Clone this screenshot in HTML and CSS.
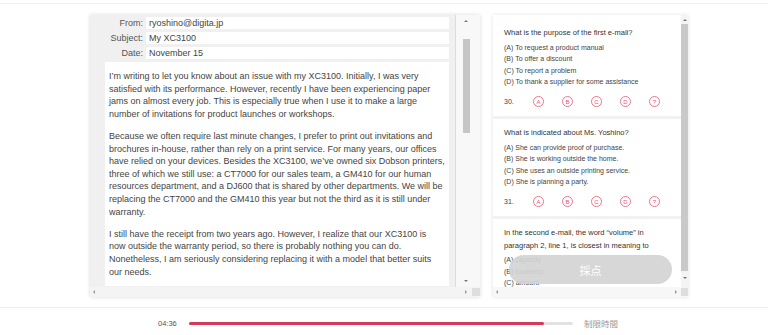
FILE: index.html
```html
<!DOCTYPE html>
<html lang="en">
<head>
    <meta charset="UTF-8">
    <meta name="viewport" content="width=device-width, initial-scale=1.0">
    <title>Reading Test</title>
    <link rel="stylesheet" href="styles.css">
</head>
<body>
    <div class="topbar"></div>
    <div class="main">
        <div class="passage">
            <div class="passage-view">
                <div class="passage-inner">
                    <div class="mail-head">
                        <div class="head-row"><span class="head-label">From:</span><span class="head-value">ryoshino@digita.jp</span></div>
                        <div class="head-row"><span class="head-label">Subject:</span><span class="head-value">My XC3100</span></div>
                        <div class="head-row"><span class="head-label">Date:</span><span class="head-value">November 15</span></div>
                    </div>
                    <div class="mail-body">
                        <p>I’m writing to let you know about an issue with my XC3100. Initially, I was very<br>satisfied with its performance. However, recently I have been experiencing paper<br>jams on almost every job. This is especially true when I use it to make a large<br>number of invitations for product launches or workshops.</p>
                        <p>Because we often require last minute changes, I prefer to print out invitations and<br>brochures in-house, rather than rely on a print service. For many years, our offices<br>have relied on your devices. Besides the XC3100, we’ve owned six Dobson printers,<br>three of which we still use: a CT7000 for our sales team, a GM410 for our human<br>resources department, and a DJ600 that is shared by other departments. We will be<br>replacing the CT7000 and the GM410 this year but not the third as it is still under<br>warranty.</p>
                        <p>I still have the receipt from two years ago. However, I realize that our XC3100 is<br>now outside the warranty period, so there is probably nothing you can do.<br>Nonetheless, I am seriously considering replacing it with a model that better suits<br>our needs.</p>
                    </div>
                </div>
                <div class="vscroll">
                    <span class="arrow-up"></span>
                    <div class="vtrack"><div class="vthumb"></div></div>
                    <span class="arrow-down"></span>
                </div>
            </div>
            <div class="hscroll">
                <span class="arrow-left"></span>
                <span class="arrow-right"></span>
                <span class="corner"></span>
            </div>
        </div>

        <div class="questions">
            <div class="q-view">
                <div class="q-list">
                    <div class="q-card">
                        <div class="q-text">What is the purpose of the first e-mail?</div>
                        <div class="q-options">
                            <div>(A) To request a product manual</div>
                            <div>(B) To offer a discount</div>
                            <div>(C) To report a problem</div>
                            <div>(D) To thank a supplier for some assistance</div>
                        </div>
                        <div class="q-answer">
                            <span class="q-num">30.</span>
                            <span class="choice">A</span>
                            <span class="choice">B</span>
                            <span class="choice">C</span>
                            <span class="choice">D</span>
                            <span class="choice">?</span>
                        </div>
                    </div>
                    <div class="q-card">
                        <div class="q-text">What is indicated about Ms. Yoshino?</div>
                        <div class="q-options">
                            <div>(A) She can provide proof of purchase.</div>
                            <div>(B) She is working outside the home.</div>
                            <div>(C) She uses an outside printing service.</div>
                            <div>(D) She is planning a party.</div>
                        </div>
                        <div class="q-answer">
                            <span class="q-num">31.</span>
                            <span class="choice">A</span>
                            <span class="choice">B</span>
                            <span class="choice">C</span>
                            <span class="choice">D</span>
                            <span class="choice">?</span>
                        </div>
                    </div>
                    <div class="q-card">
                        <div class="q-text">In the second e-mail, the word “volume” in<br>paragraph 2, line 1, is closest in meaning to</div>
                        <div class="q-options">
                            <div>(A) capacity</div>
                            <div>(B) loudness</div>
                            <div>(C) amount</div>
                        </div>
                    </div>
                </div>
                <div class="thin-scroll">
                    <span class="arrow-up small"></span>
                    <div class="thin-thumb"></div>
                    <span class="arrow-down small"></span>
                </div>
            </div>
            <div class="hscroll light">
                <span class="arrow-left"></span>
                <span class="arrow-right"></span>
                <span class="corner small"></span>
            </div>
            <button class="grade-btn">採点</button>
        </div>
    </div>

    <div class="timer">
        <span class="time-left">04:36</span>
        <div class="time-bar"><div class="time-fill" style="width: 92.4%"></div></div>
        <span class="time-label">制限時間</span>
    </div>
</body>
</html>
```

FILE: styles.css
```css
body {
    margin: 0;
    background-color: #fff;
    font-family: "Liberation Sans", Arial, sans-serif;
    color: #333;
}
.topbar {
    height: 3px;
    border-bottom: 1px solid #f0f0f0;
}
.main {
    display: flex;
    gap: 13px;
    padding: 11px 0 0 90px;
    height: 282px;
}

/* left: e-mail passage */
.passage {
    width: 390px;
    height: 282px;
    background-color: #f0f0f0;
    box-shadow: 0 0 4px rgba(0, 0, 0, 0.15);
    display: flex;
    flex-direction: column;
}
.passage-view {
    display: flex;
    height: 272px;
}
.passage-inner {
    width: 363px;
    padding-right: 6px;
}
.mail-head {
    padding-top: 2px;
}
.head-row {
    display: flex;
    height: 12px;
    margin-bottom: 3px;
    font-size: 9px;
    line-height: 12px;
}
.head-label {
    width: 53px;
    text-align: right;
    color: #555;
}
.head-value {
    flex: 1;
    margin-left: 3px;
    padding-left: 3px;
    background-color: #fff;
    color: #444;
}
.mail-body {
    margin: 2px 0 0 15px;
    height: 224px;
    box-sizing: border-box;
    padding: 8px 0 0 4px;
    background-color: #fff;
    font-size: 9px;
    line-height: 12.6px;
    color: #444;
}
.mail-body p {
    margin: 0 0 9.6px 0;
}
.vscroll {
    width: 20px;
    border-left: 1px solid #dcdcdc;
    background-color: #f8f8f8;
    display: flex;
    flex-direction: column;
    align-items: center;
    padding-right: 4px;
}
.vtrack {
    flex: 1;
    width: 7px;
}
.vthumb {
    margin-top: 17px;
    height: 94px;
    background-color: #c6c6c6;
}
.arrow-up, .arrow-down {
    width: 0;
    height: 0;
    border-left: 2px solid transparent;
    border-right: 2px solid transparent;
}
.arrow-up {
    margin-top: 5px;
    border-bottom: 2px solid #777;
}
.arrow-down {
    margin-bottom: 5px;
    border-top: 2px solid #777;
}
.hscroll {
    height: 10px;
    display: flex;
    align-items: center;
    background-color: #f4f4f4;
    padding-left: 3px;
}
.hscroll.light {
    background-color: #f7f7f7;
}
.arrow-left, .arrow-right {
    width: 0;
    height: 0;
    border-top: 2px solid transparent;
    border-bottom: 2px solid transparent;
}
.arrow-left {
    border-right: 2px solid #999;
}
.arrow-right {
    margin-left: auto;
    border-left: 2px solid #999;
}
.corner {
    width: 8px;
    height: 8px;
    margin-left: 5px;
    background-color: #dedede;
}
.corner.small {
    width: 7px;
    margin-left: 4px;
}

/* right: questions */
.questions {
    position: relative;
    width: 195px;
    height: 282px;
    background-color: #fff;
    box-shadow: 0 0 4px rgba(0, 0, 0, 0.12);
    display: flex;
    flex-direction: column;
}
.q-view {
    display: flex;
    height: 272px;
}
.q-list {
    width: 188px;
    padding-top: 4px;
    overflow: hidden;
}
.q-card {
    padding: 8px 0 8px 11px;
    border-bottom: 3px solid #f2f2f2;
}
.q-text {
    font-size: 7.5px;
    line-height: 12.6px;
    color: #333;
}
.q-options {
    margin-top: 2px;
    font-size: 7px;
    line-height: 11.6px;
    color: #444;
}
.q-answer {
    display: flex;
    align-items: center;
    height: 12px;
    margin-top: 8px;
    font-size: 7px;
    color: #444;
}
.q-num {
    width: 29px;
}
.choice {
    width: 11px;
    height: 11px;
    margin-right: 18px;
    box-sizing: border-box;
    border: 1px solid #e8788f;
    border-radius: 50%;
    color: #e05572;
    font-size: 6px;
    display: flex;
    align-items: center;
    justify-content: center;
}
.thin-scroll {
    width: 7px;
    background-color: #f4f4f4;
    display: flex;
    flex-direction: column;
    align-items: center;
}
.thin-thumb {
    width: 7px;
    height: 247px;
    margin-top: 3px;
    background-color: #c9c9c9;
}
.arrow-up.small {
    margin-top: 4px;
}
.arrow-down.small {
    margin-top: 6px;
}
.grade-btn {
    position: absolute;
    left: 16px;
    top: 240px;
    width: 163px;
    height: 29px;
    border: none;
    border-radius: 15px;
    background-color: rgba(212, 212, 212, 0.92);
    color: #fff;
    font-family: "Noto Sans CJK JP", sans-serif;
    font-size: 11px;
}

/* bottom timer */
.timer {
    margin-top: 10px;
    border-top: 1px solid #ececec;
    height: 30px;
    display: flex;
    align-items: center;
    padding-left: 158px;
}
.time-left {
    width: 21px;
    font-size: 7.5px;
    color: #555;
}
.time-bar {
    width: 384px;
    height: 3px;
    margin-left: 10px;
    background-color: #e2e2e2;
    border-radius: 2px;
}
.time-fill {
    height: 3px;
    background-color: #d7395b;
    border-radius: 2px;
}
.time-label {
    margin-left: 11px;
    font-family: "Noto Sans CJK JP", sans-serif;
    font-size: 8.5px;
    color: #999;
}
```
